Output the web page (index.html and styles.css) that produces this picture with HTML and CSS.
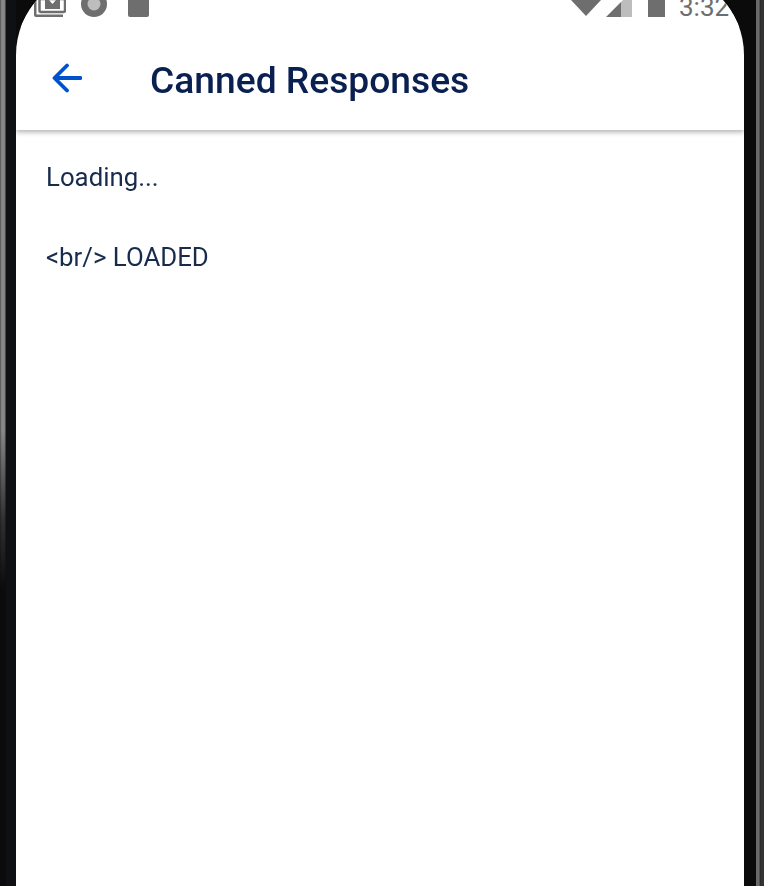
FILE: index.html
```html
<!DOCTYPE html>
<html lang="en">
<head>
<meta charset="utf-8">
<title>Canned Responses</title>
<link rel="stylesheet" href="styles.css">
</head>
<body>
<div class="device">
  <div class="edge edge-left"></div>
  <div class="screen">
    <div class="status">
      <div class="status-left">
        <svg class="ic-photo" width="32" height="18" viewBox="0 0 32 18"><path d="M0 0v15a2 2 0 0 0 2 2h27v-2.500H2.500V0z" fill="#6e6e6e"/><path d="M5.500-1h25.500v11.500a1.500 1.500 0 0 1-1.500 1.500H7a1.500 1.500 0 0 1-1.500-1.500z" fill="none" stroke="#6e6e6e" stroke-width="2.500"/><path d="M11 0h4l3.500 4L22 0h4v9H11z" fill="#6e6e6e"/></svg>
        <svg class="ic-disc" width="28" height="18" viewBox="0 0 28 18"><circle cx="14" cy="4" r="13" fill="#6e6e6e"/><circle cx="14" cy="4" r="6.500" fill="#bdbdbd"/></svg>
        <svg class="ic-card" width="22" height="18" viewBox="0 0 22 18"><path d="M0 0h21v15a2 2 0 0 1-2 2H2a2 2 0 0 1-2-2z" fill="#6e6e6e"/></svg>
      </div>
      <div class="status-right">
        <svg class="ic-wifi" width="30" height="18" viewBox="0 0 30 18"><path d="M0 0h30L15 16z" fill="#6e6e6e"/></svg>
        <svg class="ic-signal" width="26" height="18" viewBox="0 0 26 18"><path d="M0 17L15 2v15z" fill="#6e6e6e"/><path d="M15 2L17 0h9v17H15z" fill="#bdbdbd"/></svg>
        <svg class="ic-battery" width="17" height="18" viewBox="0 0 17 18"><path d="M0 0h17v17H0z" fill="#6e6e6e"/></svg>
        <span class="clock">3:32</span>
      </div>
    </div>
    <header class="appbar">
      <svg class="back" width="32" height="32" viewBox="0 0 32 32"><path d="M30.500 16H5M17 3.500 4.500 16 17 28.500" fill="none" stroke="#0052cc" stroke-width="3.800" stroke-linecap="round" stroke-linejoin="round"/></svg>
      <h1 class="title">Canned Responses</h1>
    </header>
    <main class="content">
      <p class="line">Loading...</p>
      <p class="line">&lt;br/&gt; LOADED</p>
    </main>
  </div>
  <div class="edge edge-right"></div>
</div>
</body>
</html>
```
FILE: styles.css
```css
* { box-sizing: border-box; }
html, body { margin: 0; height: 100%; }
body { background: #0b0b0c; overflow: hidden; font-family: Roboto, sans-serif; }
.device { height: 886px; display: flex; }
.edge { flex: none; height: 100%; }
.edge-left {
  width: 16px;
  background:
    linear-gradient(180deg, rgba(11,11,13,0) 0, rgba(11,11,13,0) 430px, rgba(11,11,13,.7) 520px, #0b0b0d 590px) 0 0 / 6px 100% no-repeat,
    linear-gradient(90deg, #555 0, #8c8c8c 2px, #808080 5px, #0f1013 6px, #0f1013 100%);
}
.edge-right { width: 20px; background: linear-gradient(90deg, #0b0b0c 0, #0b0b0c 12px, #6a6a6a 12px, #6a6a6a 15px, #3c3c3c 16px, #1c1c1c 17px, #333 17px, #333 20px); }
.screen { flex: 1; min-width: 0; height: 913px; margin-top: -27px; background: #fff; border-radius: 82px 82px 0 0; overflow: hidden; display: flex; flex-direction: column; }
.status { height: 55px; flex: none; position: relative; z-index: 1; background: #fff; display: flex; justify-content: space-between; align-items: flex-start; padding: 27px 15px 0 18px; }
.status-left, .status-right { display: flex; align-items: flex-start; }
.ic-disc { margin-left: 14px; }
.ic-card { margin-left: 20px; }
.ic-signal { margin-left: 5px; }
.ic-battery { margin-left: 16px; }
.clock { margin: -5px 0 0 14px; width: 50px; font-size: 26px; line-height: 24px; color: #6e6e6e; }
.appbar { height: 102px; flex: none; display: flex; align-items: center; padding: 0 30px 0 34px; box-shadow: 0 2px 5px rgba(0,0,0,.32); }
.back { flex: none; margin-top: -2px; }
.title { margin: 2px 0 0 68px; font-size: 37.2px; font-weight: 500; color: #0a2050; filter: blur(.3px); }
.content { padding: 33px 30px; flex: 1; }
.line { margin: 0 0 52px; font-size: 25.8px; line-height: 28px; color: #172b4d; filter: blur(.3px); }
```
